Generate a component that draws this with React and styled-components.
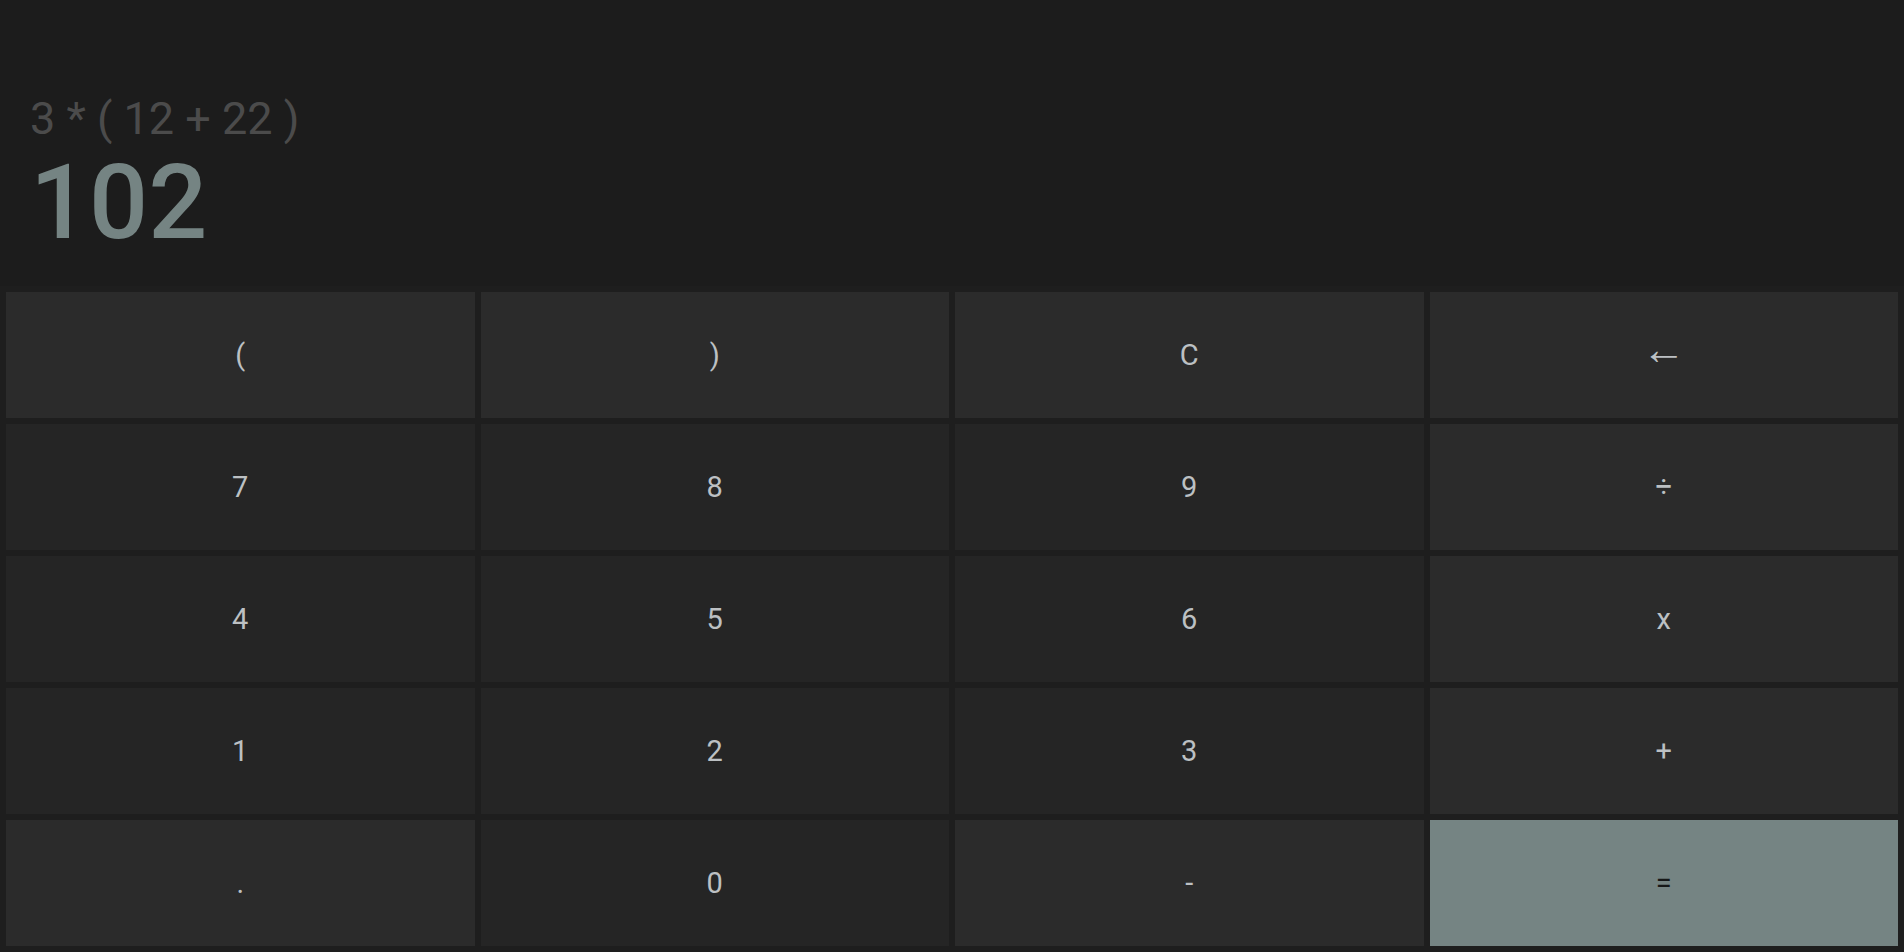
import styled, { createGlobalStyle } from "styled-components";

const GlobalStyle = createGlobalStyle`
  html, body {
    margin: 0;
    padding: 0;
    background-color: #1c1c1c;
  }
  body {
    font-family: Roboto, "Liberation Sans", sans-serif;
  }
`;

const Calculator = styled.div`
  display: flex;
  flex-direction: column;
  width: 100vw;
  height: 100vh;
  background-color: #1c1c1c;
`;

const Display = styled.div`
  height: 286px;
  display: flex;
  flex-direction: column;
  justify-content: flex-end;
  padding: 0 30px 31px;
  box-sizing: border-box;
`;

const Expression = styled.div`
  font-size: 45px;
  line-height: 44px;
  font-weight: 400;
  color: #4b4b4b;
  margin-bottom: 10px;
`;

const Result = styled.div`
  font-size: 104px;
  line-height: 104px;
  font-weight: 500;
  color: #758483;
`;

const Keypad = styled.div`
  flex: 1;
  display: grid;
  grid-template-columns: repeat(4, 1fr);
  grid-template-rows: repeat(5, 1fr);
  gap: 6px;
  padding: 6px;
  background-color: #1e1e1e;
`;

const Key = styled.button`
  border: none;
  border-radius: 0;
  margin: 0;
  padding: 0 0 ${(p) => (p.$big ? "12px" : "0")};
  font-family: Roboto, "Liberation Sans", "DejaVu Sans", sans-serif;
  font-size: ${(p) => (p.$big ? "44px" : "29px")};
  line-height: 1;
  color: ${(p) => (p.$variant === "equals" ? "#161818" : "#bcc0c3")};
  background-color: ${(p) =>
    p.$variant === "equals" ? "#758483" : p.$variant === "op" ? "#2b2b2b" : "#252525"};
  cursor: pointer;
`;

const keys = [
  ["(", "op"], [")", "op"], ["C", "op"], ["←", "op", true],
  ["7", "num"], ["8", "num"], ["9", "num"], ["÷", "op"],
  ["4", "num"], ["5", "num"], ["6", "num"], ["x", "op"],
  ["1", "num"], ["2", "num"], ["3", "num"], ["+", "op"],
  [".", "op"], ["0", "num"], ["-", "op"], ["=", "equals"],
];

export default function App() {
  return (
    <Calculator>
      <GlobalStyle />
      <Display>
        <Expression>3 * ( 12 + 22 )</Expression>
        <Result>102</Result>
      </Display>
      <Keypad>
        {keys.map(([label, variant, big]) => (
          <Key key={label} $variant={variant} $big={big}>
            {label}
          </Key>
        ))}
      </Keypad>
    </Calculator>
  );
}
